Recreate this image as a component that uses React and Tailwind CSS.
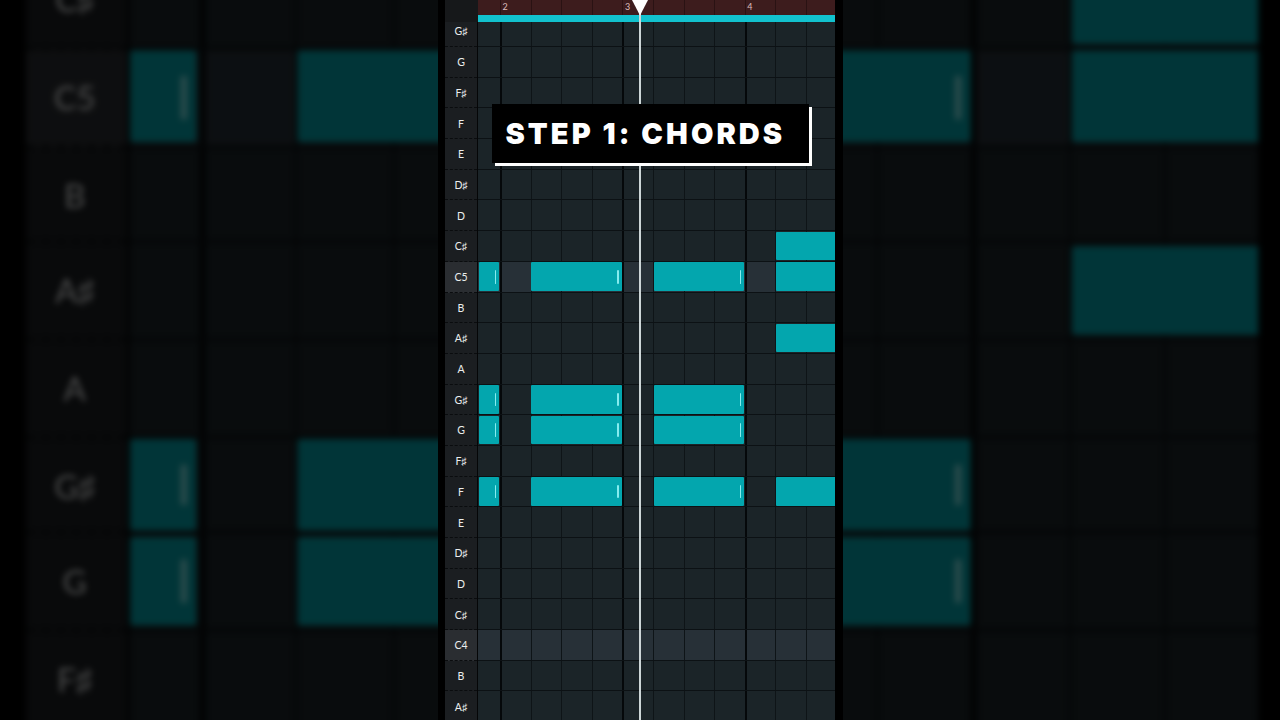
import React from "react";

const ROWS = [
  "G♯", "G", "F♯", "F", "E", "D♯", "D", "C♯", "C5", "B", "A♯", "A",
  "G♯", "G", "F♯", "F", "E", "D♯", "D", "C♯", "C4", "B", "A♯",
];

const CHORD = [[0, 1], [2, 5], [6, 9]];
const NOTES = {
  7: [[10, 12]],
  8: [...CHORD, [10, 12]],
  10: [[10, 12]],
  12: CHORD,
  13: CHORD,
  15: [...CHORD, [10, 12]],
};

const BARS = { 1: "2", 5: "3", 9: "4" };
const CELLS = Array.from({ length: 12 }, (_, k) => k);

// column boundary in px from the grid's left edge
const edge = (k) => (k === 0 ? 0 : 22 + (k - 1) * 30.6);

function cellClass(k) {
  if (k === 0) return "w-[22px]";
  if (BARS[k]) return "w-[30.6px] border-l-2 border-[#05080a]";
  return "w-[30.6px] border-l border-[#0e1417]";
}

function Note({ from, to }) {
  const left = edge(from) + 0.7;
  const width = edge(to) - edge(from) - 1.2;
  return (
    <div
      className="absolute top-[0.5px] bottom-[0.5px] rounded-[1px] bg-[#03a6ae]"
      style={{ left, width }}
    >
      {to < 12 && (
        <div className="absolute right-[3px] top-[26%] h-[48%] w-[1.5px] rounded-full bg-[#86ecef]" />
      )}
    </div>
  );
}

function Row({ label, index }) {
  const first = index === 0;
  const octave = label === "C5" || label === "C4";
  const notes = NOTES[index] || [];
  return (
    <div className={`flex shrink-0 ${first ? "h-[25px]" : "h-[30.7px]"}`}>
      <div
        className={`flex w-[32px] shrink-0 items-center justify-center border-b-[1.5px] border-dashed border-[#0a0c0e] pt-[2.5px] text-[10.5px] text-[#eceeee] ${
          octave ? "bg-[#2a2d31]" : "bg-[#1b1e21]"
        } ${first ? "pb-[6px]" : ""}`}
      >
        {label}
      </div>
      <div className="w-px shrink-0 bg-[#050607]" />
      <div className="relative flex flex-1 overflow-hidden border-b border-[#0c1114]">
        {CELLS.map((k) => (
          <div
            key={k}
            className={`h-full shrink-0 ${cellClass(k)} ${octave ? "bg-[#273037]" : "bg-[#1b2428]"}`}
          />
        ))}
        {notes.map(([a, b]) => (
          <Note key={a} from={a} to={b} />
        ))}
      </div>
    </div>
  );
}

function Ruler() {
  return (
    <div className="flex h-[22px] shrink-0">
      <div className="w-[33px] shrink-0 bg-[#16181a]" />
      <div className="flex flex-1 flex-col overflow-hidden">
        <div className="flex h-[15px] bg-[#3d1c1d]">
          {CELLS.map((k) => (
            <div
              key={k}
              className={`h-full shrink-0 ${
                k === 0 ? "w-[22px]" : "w-[30.6px] border-l border-[#2a1213]"
              } pl-[1.5px] text-[9px] leading-[14px] text-[#dcbcbc]`}
            >
              {BARS[k] || ""}
            </div>
          ))}
        </div>
        <div className="h-[7px] bg-[#12c2ce]" />
      </div>
    </div>
  );
}

function Video({ caption }) {
  return (
    <div className="relative h-[720px] w-[405px] shrink-0 overflow-hidden bg-black font-['Lato','Noto_Sans',sans-serif]">
      <div className="ml-[7.5px] flex h-full w-[390px] flex-col overflow-hidden">
        <Ruler />
        {ROWS.map((label, i) => (
          <Row key={i} label={label} index={i} />
        ))}
      </div>

      {/* playhead */}
      <div className="absolute bottom-0 left-[201.2px] top-0 w-[2px] bg-[#cdd6d7]" />
      <svg className="absolute left-[194.5px] top-0" width="16" height="16" viewBox="0 0 16 16">
        <polygon points="0,0 16,0 8,15.5" fill="#ffffff" />
      </svg>

      {caption && (
        <div className="absolute left-[54px] top-[104px] flex h-[59px] w-[317px] items-center bg-black pl-[14px] shadow-[3px_3px_0_0_#ffffff]">
          <span className="font-['Inter',sans-serif] text-[29px] font-black leading-none tracking-[0.105em] text-white">
            STEP 1: CHORDS
          </span>
        </div>
      )}
    </div>
  );
}

export default function App() {
  return (
    <div className="relative h-[720px] w-full overflow-hidden bg-black">
      <div className="absolute inset-0 flex items-center justify-center">
        <div className="scale-[3.1605] blur-[1px] brightness-[0.32]">
          <Video />
        </div>
      </div>
      <div className="relative flex h-full justify-center">
        <Video caption />
      </div>
    </div>
  );
}
